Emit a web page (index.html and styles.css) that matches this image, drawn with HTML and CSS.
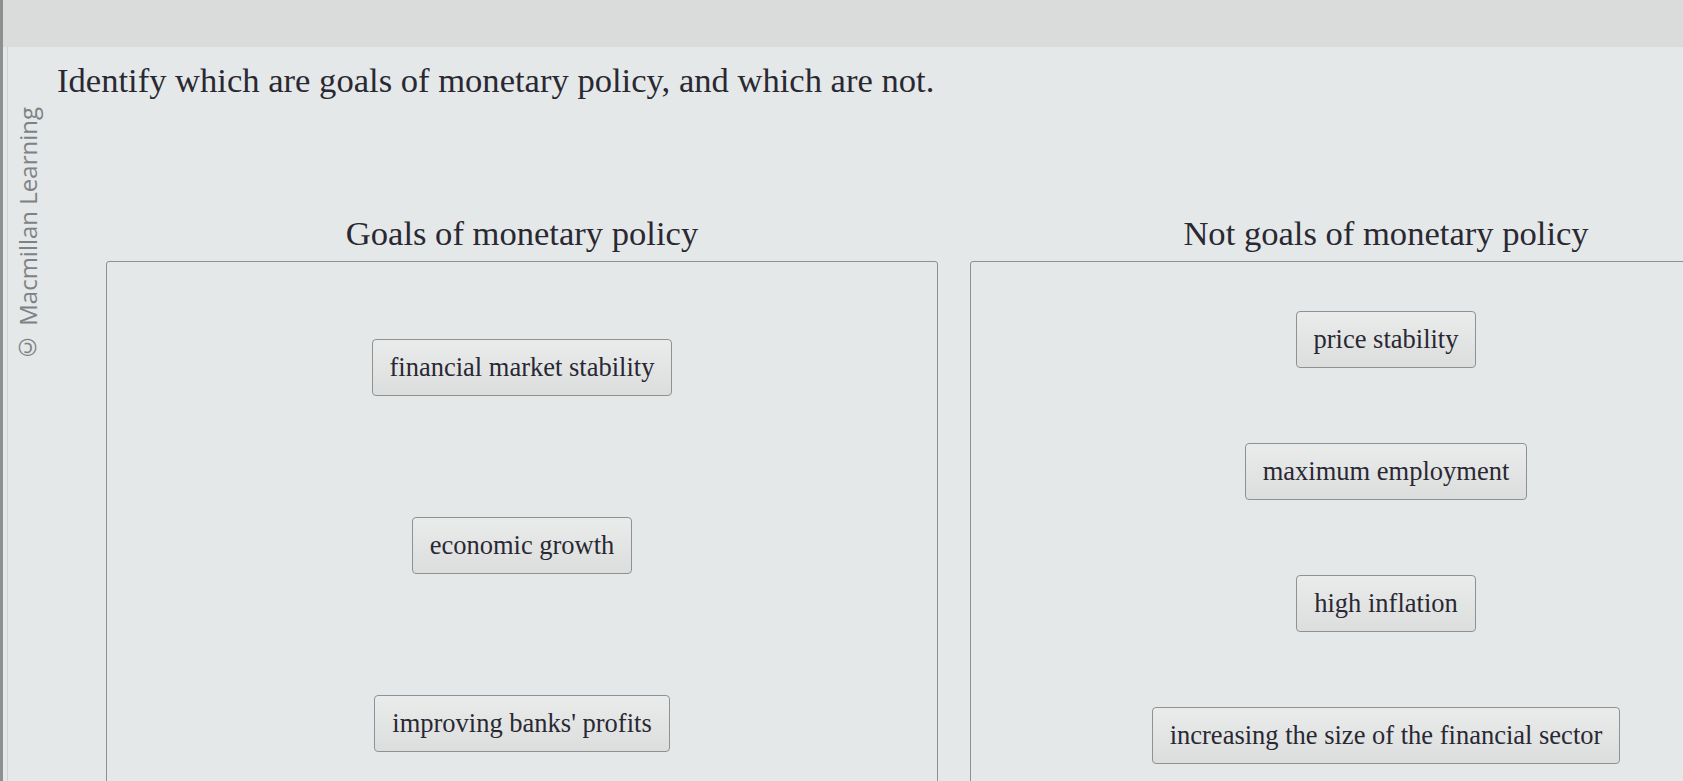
FILE: index.html
```html
<!DOCTYPE html>
<html lang="en">
<head>
  <meta charset="UTF-8" />
  <meta name="viewport" content="width=device-width, initial-scale=1.0"/>
  <title>Goals of monetary policy</title>
  <link rel="stylesheet" href="styles.css">
</head>
<body>
  <div class="topbar"></div>

  <div class="page">
    <div class="rail">
      <span class="watermark">© Macmillan Learning</span>
    </div>

    <main class="content">
      <h1 class="question">Identify which are goals of monetary policy, and which are not.</h1>

      <div class="columns">
        <section class="bucket">
          <h2>Goals of monetary policy</h2>
          <div class="dropzone goals">
            <div class="chip">financial market stability</div>
            <div class="chip">economic growth</div>
            <div class="chip">improving banks' profits</div>
          </div>
        </section>

        <section class="bucket">
          <h2>Not goals of monetary policy</h2>
          <div class="dropzone not-goals">
            <div class="chip">price stability</div>
            <div class="chip">maximum employment</div>
            <div class="chip">high inflation</div>
            <div class="chip">increasing the size of the financial sector</div>
          </div>
        </section>
      </div>
    </main>
  </div>
</body>
</html>
```

FILE: styles.css
```css
* {
  box-sizing: border-box;
  margin: 0;
  padding: 0;
}

body {
  background-color: #e5e8e8;
  font-family: 'Liberation Serif', 'Times New Roman', serif;
  color: #2a2833;
  overflow: hidden;
  height: 100vh;
  border-left: 3px solid #8d8f90;
}

.topbar {
  height: 47px;
  background-color: #dadcdc;
}

.page {
  display: flex;
  border-left: 1px solid #d0d2d2;
  margin-left: 4px;
  height: calc(100vh - 47px);
}

.rail {
  width: 40px;
  flex-shrink: 0;
  display: flex;
  justify-content: center;
  align-items: flex-start;
  padding-top: 60px;
}

.watermark {
  writing-mode: vertical-rl;
  transform: rotate(180deg);
  font-family: 'Open Sans', 'Noto Sans', sans-serif;
  font-size: 24px;
  line-height: 28px;
  color: #7f8285;
  white-space: nowrap;
}

.content {
  padding-left: 9px;
  flex-shrink: 0;
}

.question {
  font-weight: normal;
  font-size: 34.6px;
  line-height: 40px;
  margin-top: 13px;
  white-space: nowrap;
}

.columns {
  display: grid;
  grid-template-columns: 832px 832px;
  gap: 32px;
  margin-left: 49px;
  margin-top: 113px;
}

.bucket h2 {
  font-weight: normal;
  font-size: 34.6px;
  line-height: 40px;
  text-align: center;
  margin-bottom: 8px;
}

.dropzone {
  border: 1px solid #8e9091;
  border-radius: 3px;
  min-height: 620px;
  display: flex;
  flex-direction: column;
  align-items: center;
}

.goals {
  padding-top: 77px;
  gap: 121px;
}

.not-goals {
  padding-top: 49px;
  gap: 75px;
}

.chip {
  font-size: 26.5px;
  line-height: 29px;
  padding: 13px 17px;
  border: 1px solid #8f9192;
  border-radius: 4px;
  background: linear-gradient(#eaecec, #dcdede);
  white-space: nowrap;
}
```
